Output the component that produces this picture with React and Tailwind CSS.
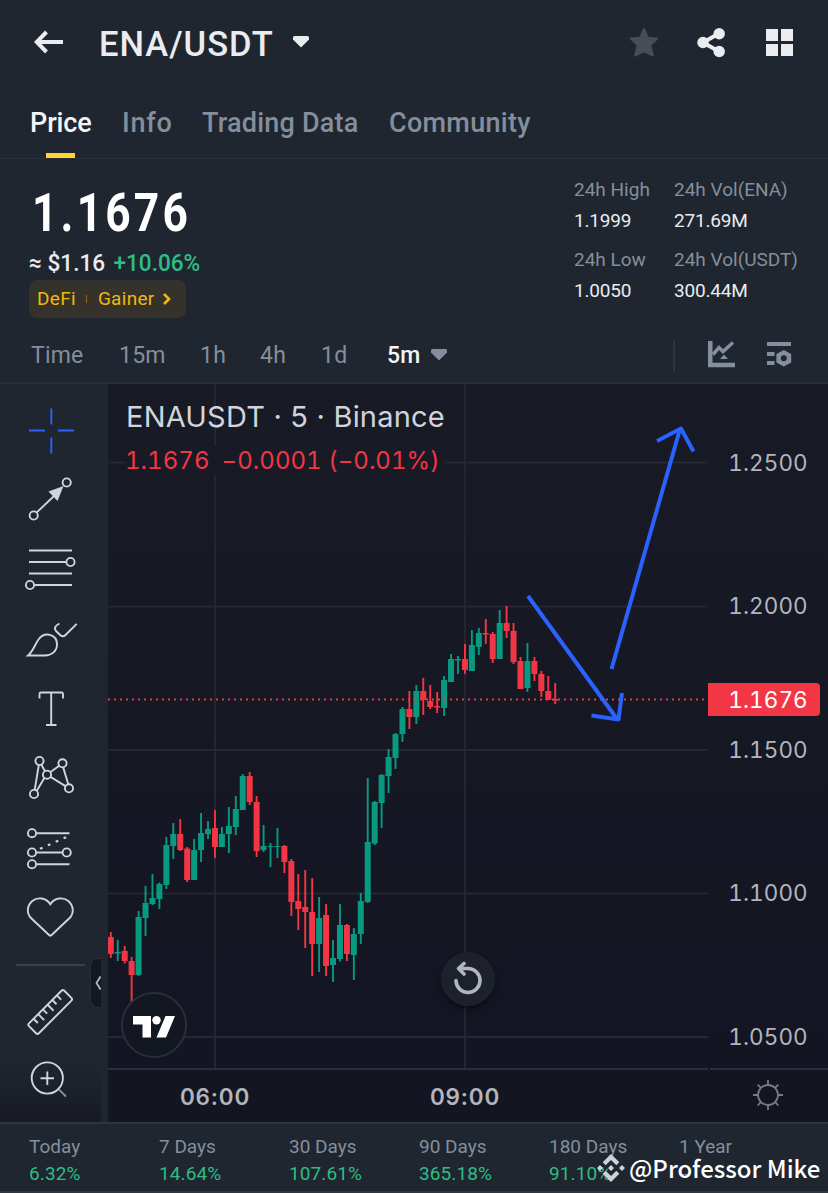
const tabs = [
  { label: 'Price', cls: 'w-[92px] tracking-[-0.1px] text-[#f4f5f8]' },
  { label: 'Info', cls: 'w-[80px] tracking-[0.8px] text-[#848e9c]' },
  { label: 'Trading Data', cls: 'w-[187px] tracking-[0.2px] text-[#848e9c]' },
  { label: 'Community', cls: 'tracking-[0.3px] text-[#848e9c]' },
];

const stats = [
  { label: '24h High', value: '1.1999' },
  { label: '24h Vol(ENA)', value: '271.69M' },
  { label: '24h Low', value: '1.0050' },
  { label: '24h Vol(USDT)', value: '300.44M' },
];

const intervals = [
  { label: 'Time', cls: 'w-[88px]' },
  { label: '15m', cls: 'w-[81px]' },
  { label: '1h', cls: 'w-[60px]' },
  { label: '4h', cls: 'w-[61px]' },
  { label: '1d', cls: 'w-[66px]' },
];

const periods = [
  { label: 'Today', value: '6.32%' },
  { label: '7 Days', value: '14.64%' },
  { label: '30 Days', value: '107.61%' },
  { label: '90 Days', value: '365.18%' },
  { label: '180 Days', value: '91.10%' },
  { label: '1 Year', value: '--' },
];

const prices = ['1.2500', '1.2000', '1.1500', '1.1000', '1.0500'];

// [up, high, bodyTop, bodyBottom, low]
const candles = [
  [0, 548, 553, 570, 574], [1, 556, 568, 569.5, 577], [0, 562, 567, 577, 579.5], [0, 573, 577, 591, 618],
  [1, 527, 533, 591, 592], [1, 502, 519, 534, 552], [1, 490, 514, 520, 521], [1, 498.5, 500, 515, 525],
  [1, 453, 461, 501, 505], [1, 439, 450, 462, 475], [0, 435, 450, 466, 467], [0, 463, 464.5, 496, 498],
  [1, 455, 466, 496, 496], [1, 429, 449, 466, 478], [1, 437, 445, 450, 455], [0, 426, 444, 463, 474],
  [1, 443, 450, 463, 463], [1, 423, 442, 450, 469], [1, 412, 425, 443, 451], [1, 390, 392, 426, 426],
  [0, 388, 392, 418, 421], [0, 412, 418, 467, 473], [1, 441, 462, 466, 468], [1, 459, 462, 463, 483],
  [1, 444, 462, 463, 474], [0, 461, 462, 478, 489], [0, 475, 477, 518, 532], [0, 490, 517, 525, 546],
  [0, 486, 523, 528, 564], [0, 494, 528, 560, 592], [1, 513, 534, 560, 588], [0, 520, 531, 582, 592],
  [1, 556, 574, 581, 598], [1, 520, 541, 575, 577.5], [0, 540, 541, 570, 577], [1, 544, 550, 571, 596],
  [1, 509, 517, 550, 560], [1, 394, 458, 518, 519], [1, 417, 418, 459.5, 461], [1, 390, 391, 419, 444],
  [1, 365, 373, 392, 409], [1, 349, 350, 374, 385], [1, 323, 325, 350, 358], [0, 307, 325, 333, 345],
  [1, 301, 307, 333, 340], [0, 294, 307, 316, 331], [0, 301, 317, 323, 325], [0, 308, 322, 323.5, 329],
  [1, 292, 296, 324, 332], [1, 270, 275, 298, 298], [1, 272, 275, 276.5, 290], [0, 260, 275, 286, 290],
  [1, 246, 261, 287, 287], [1, 244, 249, 263, 271], [0, 235, 249, 250.5, 260], [0, 248, 250, 275, 279],
  [1, 226, 239, 275, 275], [0, 222, 239, 247, 254], [0, 239, 247, 278, 280], [0, 273, 277, 305, 305],
  [1, 259, 277, 304, 308], [0, 273, 277, 290, 297], [0, 287, 290, 307, 313], [0, 292, 307, 316, 316],
  [0, 299, 315, 316.5, 320],
];

function Candles() {
  return candles.map(([up, high, top, bottom, low], i) => {
    const x = 2.8 + i * 6.944;
    return (
      <g key={i} fill={up ? '#089981' : '#f23645'}>
        <rect x={x - 0.95} y={high} width="1.9" height={low - high} />
        <rect x={x - 3} y={top} width="6" height={bottom - top} />
      </g>
    );
  });
}

function Tool({ children, color = '#d1d4dc' }) {
  return (
    <svg width="64" height="69.5" viewBox="0 0 64 69.5" fill="none" stroke={color} strokeWidth="1.9" className="block shrink-0">
      {children}
    </svg>
  );
}

function Toolbar() {
  return (
    <div className="relative w-[101px] h-[738px] pl-[19px] pt-[11.5px] bg-[linear-gradient(to_bottom,#1f262f_92%,#171a25_100%)]">
      <Tool color="#2962ff">
        <path d="M32.3 12.5v16M32.3 41.5v16M10 34.5h16M39 34.5h16" />
      </Tool>
      <Tool>
        <circle cx="14.7" cy="50.5" r="4.1" />
        <circle cx="47.7" cy="17.5" r="4.1" />
        <path d="M17.8 47.4 35 31" />
        <path d="M44.5 21 29.5 26.5 38.5 36z" fill="#d1d4dc" stroke="none" />
      </Tool>
      <Tool>
        <path d="M10 15.5h43M10 27h37M10 38.5h43M15.5 50H53" />
        <circle cx="51.5" cy="27" r="4.1" />
        <circle cx="11" cy="50" r="4.1" />
      </Tool>
      <Tool>
        <path d="M9 51.5C14.5 47 16 40 19.5 35.5C25.5 27 38 30 38 40.5C38 47.5 32 51.5 26 51.5Z" />
        <path d="M40.5 19.5C36 21.5 34.5 24.5 37.5 27.5L41.5 31.3Q44 33.5 46.5 31L57.7 19.8" />
      </Tool>
      <Tool>
        <path d="M20.5 24.5V20q0-1.5 1.5-1.5h20.5q1.5 0 1.5 1.5v4.5M32.2 18.5V51M27 51h10.5" />
      </Tool>
      <Tool>
        <path d="M15.7 47l4.1-25M22.3 21.7l3.8 6.5M31.2 29.2l9-6.4M44.2 24.4l5.1 16.8M31.5 33.9l15 9.2M25.3 34.9l-7.6 13" />
        <circle cx="20.5" cy="18" r="4.1" />
        <circle cx="43.5" cy="20.3" r="4.1" />
        <circle cx="28" cy="31.7" r="4.1" />
        <circle cx="50" cy="45.3" r="4.1" />
        <circle cx="15" cy="51" r="4.1" />
      </Tool>
      <Tool>
        <circle cx="13" cy="20.2" r="4.1" />
        <circle cx="13" cy="39.5" r="4.1" />
        <circle cx="13" cy="51.2" r="4.1" />
        <circle cx="47.7" cy="39.5" r="4.1" />
        <path d="M17.5 20.2h33M17.5 39.5h26M17.5 51.2h33" />
        <path d="M21 35.8 48 23.8" strokeWidth="2.2" strokeDasharray="2.8 5.8" />
      </Tool>
      <Tool>
        <path d="M31.3 22.3C27 15.5 18.5 14.8 13.3 19C8 23.5 7.3 31 12 36L30 53Q31.3 54.2 32.6 53L50.6 36C55.3 31 54.6 23.5 49.3 19C44.1 14.8 35.6 15.5 31.3 22.3Z" />
      </Tool>
      <div className="-ml-[3px] mt-3 h-[2px] w-[69px] bg-[#3b3f4b]" />
      <div className="h-[11px]" />
      <Tool>
        <g transform="translate(31.2 35) rotate(-45)">
          <rect x="-25" y="-7" width="50" height="14" rx="2" />
          <path d="M-16.5-7v6M-10-7v8.5M-3.3-7v6M3.3-7v8.5M10-7v6M16.5-7v6" />
        </g>
      </Tool>
      <Tool>
        <circle cx="28.3" cy="32" r="15.6" />
        <path d="M39.8 43.3 47 50.5" stroke="#8b8f9b" />
        <path d="M21.5 32.2h13.5M28.3 25.5v13.5" />
      </Tool>
      <div className="absolute right-0 top-[574px] flex h-[50px] w-[11px] items-center justify-end rounded-l-lg border border-r-0 border-[#2a2e39] bg-[#131722]">
        <svg width="6" height="16" viewBox="0 0 6 16" fill="none" stroke="#b2b5be" strokeWidth="1.8">
          <path d="M5.5 1.5 1.5 8l4 6.5" />
        </svg>
      </div>
    </div>
  );
}

function Chart() {
  return (
    <div className="relative h-[684px] w-[600px]">
      <svg width="600" height="684" viewBox="0 0 600 684" className="block">
        <path d="M0 78.5h600M0 222.5h600M0 366h600M0 509.5h600M0 653h600M107 0v684M357 0v684" stroke="#252833" strokeWidth="1.8" />
        <Candles />
        <path d="M0 315.5h600" stroke="#f23645" strokeWidth="1.8" strokeDasharray="2 4" />
        <g fill="none" stroke="#2962ff" strokeWidth="4" strokeLinejoin="round">
          <path d="M420 212 509 335M483.5 331.5 510.5 335.5 514 309" />
          <path d="M503.5 285 572 45M549 57 573 44.5 585.5 67.5" />
        </g>
      </svg>
      <div className="absolute left-[18px] top-[14px] whitespace-nowrap text-[29px] leading-[37px] tracking-[0.2px] text-[#d1d4dc]">ENAUSDT · 5 · Binance</div>
      <div className="absolute left-[17px] top-[62px] flex gap-3 whitespace-nowrap bg-[#181a25] pr-1 text-[24px] leading-[29px] tracking-[0.05px] tabular-nums text-[#f23645]">
        <span>1.1676</span>
        <span>−0.0001 (−0.01%)</span>
      </div>
      <div className="absolute left-[13px] top-[608px] flex size-[66px] items-center justify-center rounded-full border-2 border-[#2a2e39] bg-[#131722]">
        <svg width="42" height="22" viewBox="0 0 42 22" fill="#fff" className="mt-[3px]">
          <path d="M0 0h18v21.5h-8.5V8.5H0z" />
          <circle cx="23.5" cy="4.3" r="4.2" />
          <path d="M32.5 0H42L33 21.5h-9.5z" />
        </svg>
      </div>
      <div className="absolute left-[333px] top-[568px] flex size-[54px] items-center justify-center rounded-full bg-[#1c212b] shadow-md shadow-black/40">
        <svg width="30" height="36" viewBox="0 0 30 36" fill="none" stroke="#b2b5be" strokeWidth="3.6" strokeLinecap="round" strokeLinejoin="round">
          <path d="M3 19.5A12 12 0 1 0 15 7.5H6M11 2.5 5.5 7.5l5.5 5.5" />
        </svg>
      </div>
    </div>
  );
}

export default function App() {
  return (
    <div className="relative flex h-[1193px] w-[828px] flex-col overflow-hidden bg-[#1f262f] font-[Roboto,sans-serif]">
      <header className="flex h-[88px] items-center pl-[34px] pr-[35px]">
        <svg width="30" height="24" viewBox="0 0 30 24" fill="none" stroke="#eaecef" strokeWidth="4" className="mb-[5px]">
          <path d="M2.5 12H29M12.5 2 2.7 12l9.8 10" />
        </svg>
        <span className="ml-[35px] w-[194px] text-[34.5px] font-medium leading-[40px] tracking-[1px] text-[#eaecef]">ENA/USDT</span>
        <svg width="16" height="12" viewBox="0 0 16 12" fill="#eaecef" className="mb-1">
          <path d="M1.5 0h13q1.5 0 1.5 1.5v2L8.5 11q-.5.5-1 0L0 3.5v-2Q0 0 1.5 0z" />
        </svg>
        <div className="ml-auto flex items-center pb-[3px]">
          <svg width="30" height="30" viewBox="0 0 30 30" fill="#474d57" stroke="#474d57" strokeWidth="2" strokeLinejoin="round">
            <path d="m15 1 4 8.8 9.3.6-7 6.6 2.7 10.5L15 23.3 6 27.5 8.7 17l-7-6.6 9.3-.6z" />
          </svg>
          <svg width="30" height="30" viewBox="0 0 30 30" fill="#eaecef" className="ml-[37px]">
            <path d="M7 14.5 23 5.5M7 14.5l16 9" stroke="#eaecef" strokeWidth="4" />
            <circle cx="7" cy="14.5" r="5.7" />
            <circle cx="23.2" cy="5.7" r="5.7" />
            <circle cx="23.2" cy="23.5" r="5.7" />
          </svg>
          <div className="ml-[40px] grid grid-cols-2 gap-[3px]">
            <i className="size-[12px] bg-[#eaecef]" />
            <i className="size-[12px] bg-[#eaecef]" />
            <i className="size-[12px] bg-[#eaecef]" />
            <i className="size-[12px] bg-[#eaecef]" />
          </div>
        </div>
      </header>

      <nav className="flex h-[71px] border-b border-[#2b313a] pl-[30px] pt-[19px]">
        {tabs.map((t, i) => (
          <div key={t.label} className={`relative whitespace-nowrap text-[27px] font-medium leading-[33px] ${t.cls}`}>
            {t.label}
            {i === 0 && <span className="absolute left-4 top-[46px] h-[5px] w-[29px] bg-[#fcd535]" />}
          </div>
        ))}
      </nav>

      <section className="flex h-[169px] pl-[29px]">
        <div className="w-[545px] pt-[24px]">
          <div className="ml-[3px] w-[200px] origin-left scale-x-[0.82] text-[54px] font-bold leading-[60px] tracking-[3.9px] text-white">1.1676</div>
          <div className="mt-[6px] flex w-[200px] origin-left scale-x-[0.94] gap-[9px] text-[24px] font-medium leading-[28px]">
            <span className="text-[#eaecef]">≈ $1.16</span>
            <span className="text-[#2ebd85]">+10.06%</span>
          </div>
          <div className="mt-[3px] flex h-[38px] w-[157px] items-center rounded-lg bg-[#35322b] pl-2 text-[19px] tracking-[0.3px] text-[#f0b90b]">
            <span>DeFi</span>
            <i className="ml-[10px] mr-[11px] h-[8px] w-px bg-[#8a6d1c]" />
            <span>Gainer</span>
            <svg width="8" height="12" viewBox="0 0 8 12" fill="none" stroke="#f0b90b" strokeWidth="2.6" className="ml-2">
              <path d="m1 1 5 5-5 5" />
            </svg>
          </div>
        </div>
        <div className="grid h-[140px] grid-cols-[100px_140px] grid-rows-[70px_70px] pt-[19px]">
          {stats.map(s => (
            <div key={s.label} className="whitespace-nowrap text-[19px] leading-[24px]">
              <div className="text-[#848e9c]">{s.label}</div>
              <div className="mt-[7px] tracking-[-0.2px] text-[#eaecef]">{s.value}</div>
            </div>
          ))}
        </div>
      </section>

      <div className="flex h-[56px] items-center border-b-2 border-[#292f38] pl-[31px] text-[23px] tracking-[0.2px] text-[#848e9c]">
        {intervals.map(t => (
          <span key={t.label} className={`pt-[2px] ${t.cls}`}>{t.label}</span>
        ))}
        <span className="w-[44px] pt-[2px] font-medium text-[#f4f5f8]">5m</span>
        <svg width="16" height="12" viewBox="0 0 16 12" fill="#848e9c">
          <path d="M1.5 0h13q1.5 0 1.5 1.5v2L8.5 11q-.5.5-1 0L0 3.5v-2Q0 0 1.5 0z" />
        </svg>
        <i className="ml-[226px] h-[31px] w-[2px] bg-[#2f3540]" />
        <svg width="27" height="27" viewBox="0 0 27 27" fill="none" stroke="#848e9c" strokeWidth="4.5" className="mb-[2px] ml-[33px]">
          <path d="M2.25 0v24H27" />
          <path d="m5 13.5 6-7 4 4 10-9" strokeWidth="3.5" />
          <path d="M16 13.5l4 4.5h-8z" fill="#848e9c" stroke="none" />
        </svg>
        <svg width="25" height="25" viewBox="0 0 25 25" fill="#848e9c" className="mb-[2px] ml-[32px]">
          <path d="M0 0h24v4H0zM0 10h7.5v4H0zM0 19h7.5v4H0z" />
          <path fillRule="evenodd" d="m16.8 8 7.4 4v8.600l-7.400 4-7.400-4V12zm0 5.300a3 3 0 1 0 0 6 3 3 0 1 0 0-6z" />
        </svg>
      </div>

      <main className="flex h-[738px] font-[Inter,sans-serif]">
        <Toolbar />
        <div className="w-[7px]" />
        <div className="w-[720px] bg-[#131521]">
          <div className="flex h-[684px] bg-[linear-gradient(to_bottom,#181a25,#131622)]">
            <Chart />
            <div className="relative w-[120px] pt-[6.7px] text-[22.5px] tracking-[0.1px] tabular-nums">
              {prices.map(p => (
                <div key={p} className="flex h-[143.6px] items-center justify-center text-[#b2b5be]">{p}</div>
              ))}
              <div className="absolute left-0 top-[299px] flex h-[33px] w-[112px] items-center justify-center rounded-r bg-[#f23645] pl-2 text-white">1.1676</div>
            </div>
          </div>
          <div className="flex h-[54px] gap-[2px] text-[22.5px] font-semibold text-[#b2b5be]">
            <div className="flex w-[600px] items-center border-t-2 border-[#2a2e39] pl-[37px] pt-[2px]">
              <span className="w-[140px] text-center tracking-[0.8px]">06:00</span>
              <span className="ml-[110px] w-[140px] text-center tracking-[0.8px]">09:00</span>
            </div>
            <div className="flex flex-1 items-center justify-center border-t-2 border-[#2a2e39] pb-[2px] pr-[2px]">
              <svg width="30" height="30" viewBox="0 0 30 30" fill="none" stroke="#787b86" strokeWidth="1.8">
                <circle cx="15" cy="15" r="10" />
                <path d="M15 0v5M15 25v5M0 15h5M25 15h5M4.7 4.7l3.2 3.2M22.1 22.1l3.2 3.2M4.7 25.3l3.2-3.2M22.1 7.9l3.2-3.2" />
              </svg>
            </div>
          </div>
        </div>
      </main>

      <footer className="flex h-[71px] border-y-2 border-[#2f3541] pl-[29px] pt-[11px]">
        {periods.map(p => (
          <div key={p.label} className="w-[130px] shrink-0 whitespace-nowrap text-[19px] leading-[24px]">
            <div className="text-[#848e9c]">{p.label}</div>
            <div className={`mt-[3px] tracking-[0.1px] ${p.value === '--' ? 'text-[#848e9c]' : 'text-[#2ebd85]'}`}>{p.value}</div>
          </div>
        ))}
      </footer>

      {/* Author tag */}
      <div className="absolute bottom-[8px] left-[597px] flex items-center gap-1">
        <svg width="28" height="28" viewBox="0 0 28 28" fill="#d0d1d3">
          <path d="M14 0 22.3 8.3 19.3 11.3 14 6 8.7 11.3 5.7 8.3zM14 28 5.7 19.7 8.7 16.7 14 22l5.3-5.3 3 3zM3 11l3 3-3 3-3-3zM25 11l3 3-3 3-3-3zM14 11l3 3-3 3-3-3z" />
        </svg>
        <span className="whitespace-nowrap font-['Noto_Sans_CJK_SC',sans-serif] text-[24px] font-medium leading-[34px] text-white">@Professor Mike</span>
      </div>
    </div>
  );
}
